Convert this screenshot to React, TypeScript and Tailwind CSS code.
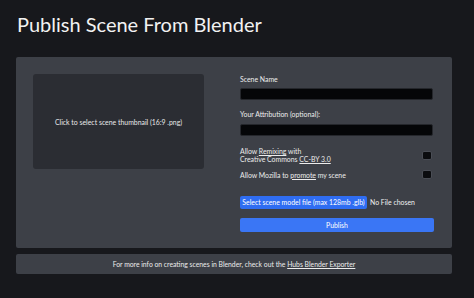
import React from "react";

export default function App() {
  return (
    <div
      className="w-full h-[298px] bg-[#17181c] px-4 text-[#ececec]"
      style={{ fontFamily: "Lato, 'Noto Sans', sans-serif" }}
    >
      <h1 className="pt-[12px] pl-[1px] text-[20px] leading-[24px] font-normal text-[#f2f2f2]">
        Publish Scene From Blender
      </h1>
      <div className="mt-[21px] w-[436px] h-[191px] bg-[#3d4047] rounded-[2px] flex pl-[17px] pt-[17px]">
        <div className="w-[171px] h-[95px] bg-[#2b2d33] rounded-[3px] flex items-center justify-center text-[6.9px] leading-[10px] text-[#e8e8e8]">
          Click to select scene thumbnail (16:9 .png)
        </div>
        <div className="ml-[36px] w-[194px] flex flex-col text-[6.9px]">
          <div className="leading-[10px] h-[10px]">Scene Name</div>
          <div className="mt-[4px] h-[12px] w-[193px] bg-[#050608] border border-[#25272c] rounded-[2px]" />
          <div className="mt-[9px] leading-[10px] h-[10px]">Your Attribution (optional):</div>
          <div className="mt-[5px] h-[12px] w-[193px] bg-[#050608] border border-[#25272c] rounded-[2px]" />
          <div className="mt-[11px] flex items-center justify-between w-[192px]">
            <div className="leading-[8px]">
              <div>
                Allow <span className="underline">Remixing</span> with
              </div>
              <div>
                Creative Commons <span className="underline">CC-BY 3.0</span>
              </div>
            </div>
            <div className="w-[10px] h-[9px] bg-[#0b0c0f] border border-[#4a4d55] rounded-[2px]" />
          </div>
          <div className="mt-[7px] flex items-center justify-between w-[192px]">
            <div className="leading-[8px]">
              Allow Mozilla to <span className="underline">promote</span> my scene
            </div>
            <div className="w-[10px] h-[9px] bg-[#0b0c0f] border border-[#4a4d55] rounded-[2px]" />
          </div>
          <div className="mt-[17px] flex items-center">
            <div className="h-[13px] w-[127px] bg-[#2f6df2] rounded-[2px] flex items-center justify-center leading-[13px] text-white">
              Select scene model file (max 128mb .glb)
            </div>
            <span className="ml-[3px] leading-[13px] text-[#f0f0f0]">No File chosen</span>
          </div>
          <div className="mt-[9px] h-[14px] w-[194px] bg-[#3a76f5] rounded-[2px] flex items-center justify-center leading-[14px] text-white">
            Publish
          </div>
        </div>
      </div>
      <div className="mt-[6px] w-[436px] h-[20px] bg-[#3d4047] rounded-[2px] flex items-center justify-center text-[6.8px] leading-[10px] text-[#ececec]">
        For more info on creating scenes in Blender, check out the&nbsp;
        <span className="underline">Hubs Blender Exporter</span>
      </div>
    </div>
  );
}
